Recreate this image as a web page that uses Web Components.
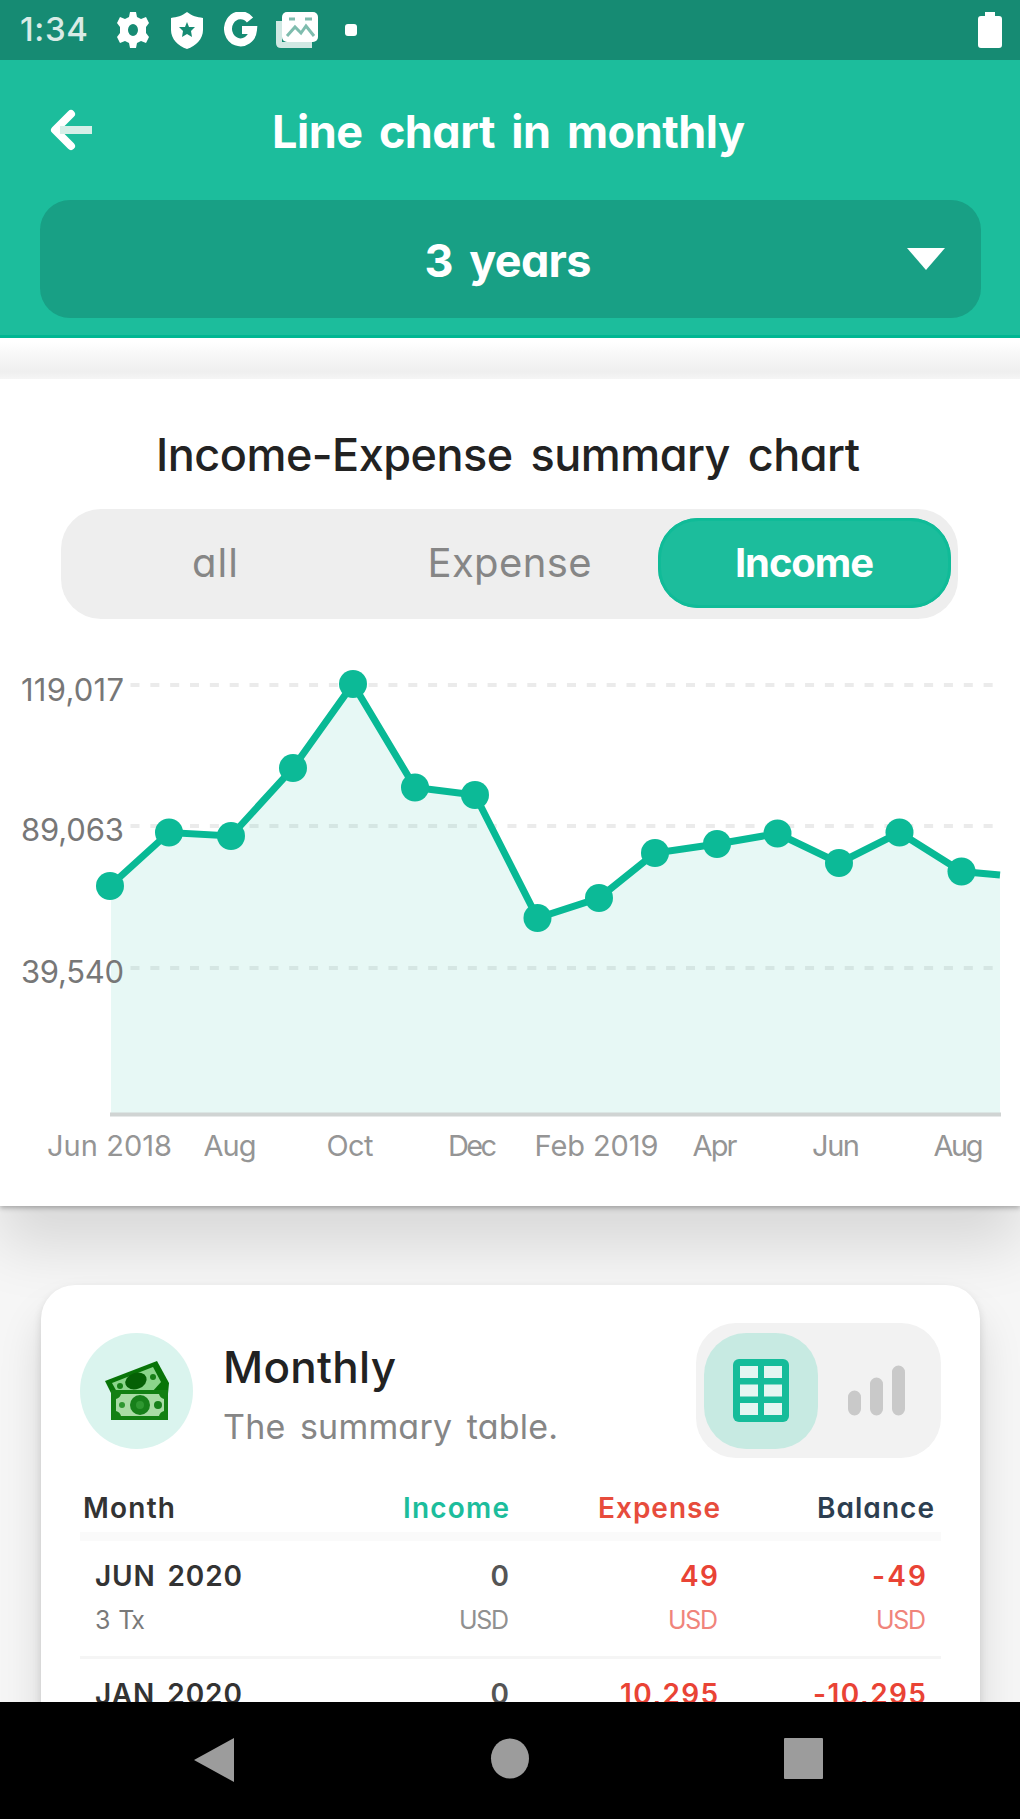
<!DOCTYPE html>
<html lang="en">
<head>
<meta charset="utf-8">
<title>Line chart in monthly</title>
<style>
    body{
        margin: 0;
        width: 1020px;
        height: 1819px;
        overflow: hidden;
        font-family: Inter, Roboto, sans-serif;
        font-feature-settings: "cv11";
        --green: #1cbd9c;
        --red: #e74c3c;
        --navy: #2c3e50;
    }
</style>
</head>
<body>
<finance-screen></finance-screen>

<script>
const define = (name, html, setup) => {
    const template = document.createElement('template');
    template.innerHTML = html;

    window.customElements.define(name, class extends HTMLElement {
        connectedCallback() {
            if(this.shadowRoot) return;
            this.attachShadow({mode: 'open'});
            this.shadowRoot.appendChild(template.content.cloneNode(true));
            if(setup) setup(this, this.shadowRoot);
        }
    });
};

// one line of text, tracked so that it fills the given width
define('text-label', `
    <style>
        :host{
            display: block;
            width: max-content;
            white-space: nowrap;
            line-height: 1.2;
            word-spacing: 0.14em;
        }
    </style>
    <slot></slot>
`, host => {
    const width = Number(host.getAttribute('width'));
    if(!width) return;
    const spacing = (width - host.getBoundingClientRect().width) / (host.textContent.length - 1);
    host.style.letterSpacing = spacing + 'px';
    host.style.marginRight = -spacing + 'px';
});

define('status-bar', `
    <style>
        :host{
            display: flex;
            align-items: center;
            box-sizing: border-box;
            height: 60px;
            padding: 0 18px 0 20px;
            background-color: #168b73;
            color: #fff;
        }
        text-label{
            font-size: 33px;
            font-weight: 500;
            color: #d9ebe6;
        }
        .icons{
            display: flex;
            align-items: center;
            flex: 1;
            margin-left: 28px;
        }
        svg{
            display: block;
            fill: currentColor;
        }
    </style>
    <text-label width="68">1:34</text-label>
    <div class="icons">
        <svg width="34" height="36" viewBox="0 0 34 36"><path fill-rule="evenodd" d="M14 0h6l1 5 4 2 5-2 3 6-3 4v6l3 4-3 6-5-2-4 2-1 5h-6l-1-5-4-2-5 2-3-6 3-4v-6l-3-4 3-6 5 2 4-2zM17 12a5 6 0 1 0 0 12a5 6 0 1 0 0-12z"/></svg>
        <svg style="margin-left: 20px" width="34" height="37" viewBox="0 0 34 37"><path fill-rule="evenodd" d="M17 0c5 4 10 5 16 6v12c0 9-7 16-16 19C8 34 1 27 1 18V6c6-1 11-2 16-6zM17 10l-2 5-6 0 4 4-1 6 5-3 5 3-1-6 4-4h-6z"/></svg>
        <svg style="margin-left: 20px" width="34" height="36" viewBox="0 0 34 36"><path fill="none" stroke="currentColor" stroke-width="8" d="M26 8A12.500 13.500 0 1 0 29 18H18"/></svg>
        <svg style="margin-left: 18px" width="42" height="36" viewBox="0 0 42 36"><path opacity=".8" d="M0 9h6v21h30v6H5q-5 0-5-5z"/><rect x="6" width="36" height="30" rx="5"/><path fill="none" stroke="#7fbcae" stroke-width="3" d="M11 24l8-9 6 6 5-7 8 10M13 7h6M29 7h7"/></svg>
        <svg style="margin-left: 27px" width="12" height="12"><rect width="12" height="12" rx="3"/></svg>
    </div>
    <svg width="24" height="36"><path d="M7 0h10v4h4q3 0 3 3v26q0 3-3 3H3q-3 0-3-3V7q0-3 3-3h4z"/></svg>
`);

define('app-header', `
    <style>
        :host{
            display: block;
            box-sizing: border-box;
            height: 278px;
            padding: 0 39px 0 40px;
            background-color: var(--green);
            color: #fff;
            border-bottom: solid 3px #00b692;
        }
        .bar, .select{
            display: grid;
            grid-template-columns: 44px 1fr 44px;
            align-items: center;
            justify-items: center;
        }
        .bar{
            height: 140px;
            padding: 0 12px 0 8px;
        }
        .select{
            height: 118px;
            padding: 0 33px 0 28px;
            border-radius: 30px;
            background-color: #18a085;
        }
        text-label{
            padding-top: 3px;
            font-size: 45px;
            font-weight: 700;
        }
    </style>
    <div class="bar">
        <svg width="44" height="42"><path fill="none" stroke="#fff" stroke-width="8" stroke-linecap="round" stroke-linejoin="round" d="M23 5L7 21l16 16"/><path stroke="#d5efe8" stroke-width="8" d="M12 21h32"/></svg>
        <text-label width="473">Line chart in monthly</text-label>
    </div>
    <div class="select">
        <span></span>
        <text-label width="167">3 years</text-label>
        <svg width="38" height="22"><path fill="#fff" d="M0 0h38L19 22z"/></svg>
    </div>
`);

define('segmented-control', `
    <style>
        :host{
            display: grid;
            grid-template-columns: 264px 1fr 293px;
            box-sizing: border-box;
            width: 897px;
            height: 111px;
            padding: 9px 7px 11px;
            border-radius: 40px;
            background-color: #eee;
            color: #868686;
            font-size: 40px;
        }
        div{
            display: flex;
            align-items: center;
            justify-content: center;
        }
        .active{
            border-radius: 40px;
            background-color: var(--green);
            box-shadow: inset 0 0 0 3px #10bb98;
            color: #fff;
            font-weight: 700;
        }
    </style>
    <div style="padding-left: 30px"><text-label width="46">all</text-label></div>
    <div style="padding-left: 29px"><text-label width="164">Expense</text-label></div>
    <div class="active"><text-label width="139">Income</text-label></div>
`);

define('line-chart', `
    <style>
        :host{
            display: block;
        }
        svg{
            display: block;
        }
        .grid{
            stroke: #dedede;
            stroke-opacity: .6;
            stroke-width: 4;
            stroke-dasharray: 9 10.84;
        }
        .area{
            fill: var(--green);
            fill-opacity: .105;
        }
        .line{
            fill: none;
            stroke: #08b995;
            stroke-width: 7;
        }
        circle{
            fill: #0cba97;
        }
        text{
            fill: #777;
            font-size: 31px;
        }
        .months text{
            fill: #959595;
            font-size: 29px;
            text-anchor: middle;
        }
    </style>
    <svg width="1020" height="586" viewBox="0 620 1020 586">
        <g class="lines"></g>
        <path class="area"/>
        <path d="M110 1114.500H1001" stroke="#d0d4d3" stroke-width="4"/>
        <path class="line"/>
        <g class="dots"></g>
        <g class="values"></g>
        <g class="months"></g>
    </svg>
`, (host, root) => {
    const points = [
        [110, 886], [169, 832.5], [231, 836], [293, 768], [353, 684],
        [415, 787.5], [475, 795], [537.5, 918], [599, 898], [655, 853],
        [717, 844], [777.5, 833.5], [839, 863], [899.5, 832.5], [961.5, 871.5]
    ];
    const values = [['119,017', 685, 701], ['89,063', 826, 841], ['39,540', 968, 983]];
    const months = [
        ['Jun 2018', 109.5, 125], ['Aug', 230, 53], ['Oct', 350, 47], ['Dec', 472.5, 49],
        ['Feb 2019', 596.5, 124], ['Apr', 715, 45], ['Jun', 836, 48], ['Aug', 958.5, 50]
    ];
    const line = 'M' + points.join('L') + 'L1000,875';

    root.querySelector('.line').setAttribute('d', line);
    root.querySelector('.area').setAttribute('d', line + 'V1114H111V886');
    root.querySelector('.dots').innerHTML = points.map(([x, y]) => `<circle cx="${x}" cy="${y}" r="14"/>`).join('');
    root.querySelector('.lines').innerHTML = values.map(([, y]) => `<path class="grid" d="M130.500 ${y}H996"/>`).join('');
    root.querySelector('.values').innerHTML = values.map(([text,, y]) => `<text x="21" y="${y}" textLength="103">${text}</text>`).join('');
    root.querySelector('.months').innerHTML = months.map(([text, x, width]) => `<text x="${x}" y="1156" textLength="${width}">${text}</text>`).join('');
});

define('chart-card', `
    <style>
        :host{
            display: flex;
            flex-direction: column;
            align-items: center;
            height: 827px;
            background-color: #fff;
            box-shadow: 0 2px 5px rgba(0,0,0,0.28), 0 40px 56px rgba(0,0,0,0.12);
            clip-path: inset(0 0 -120px 0);
        }
        text-label{
            margin: 49px 2px 27px 0;
            font-size: 45px;
            line-height: 54px;
            font-weight: 500;
            color: #222;
        }
        segmented-control{
            margin: 0 1px 1px 0;
        }
        line-chart{
            align-self: flex-start;
        }
    </style>
    <text-label width="704" style="position: relative; left: -2px">Income-Expense summary chart</text-label>
    <segmented-control></segmented-control>
    <line-chart></line-chart>
`);

define('view-toggle', `
    <style>
        :host{
            display: flex;
            align-items: center;
            box-sizing: border-box;
            width: 245px;
            height: 135px;
            padding: 0 36px 0 8px;
            border-radius: 40px;
            background-color: #f2f2f2;
            justify-content: space-between;
        }
        .active{
            display: flex;
            align-items: center;
            justify-content: center;
            width: 114px;
            height: 116px;
            border-radius: 42px;
            background-color: #c7eae2;
        }
    </style>
    <div class="active">
        <svg width="56" height="64" viewBox="0 0 56 64">
            <rect width="56" height="63" rx="6" fill="#16bc9a"/>
            <path fill="#e5f6f2" d="M7 7h18v12H7zM31 7h18v12H31zM7 25.500h18v12H7zM31 25.500h18v12H31zM7 44h18v12H7zM31 44h18v12H31z"/>
        </svg>
    </div>
    <svg width="57" height="52" viewBox="0 0 57 52">
        <path stroke="#c9c9c9" stroke-width="13" stroke-linecap="round" d="M6.500 32v12M28.500 19v25M50.500 7v37"/>
    </svg>
`);

define('card-heading', `
    <style>
        :host{
            display: flex;
            align-items: center;
            height: 135px;
        }
        .icon{
            display: flex;
            align-items: center;
            justify-content: center;
            width: 113px;
            height: 116px;
            border-radius: 50%;
            background-color: #daf4ee;
        }
        .text{
            flex: 1;
            padding: 12px 0 0 30px;
        }
        .title{
            font-size: 44px;
            line-height: 60px;
            font-weight: 500;
            color: #222;
        }
        .subtitle{
            font-size: 34px;
            line-height: 60px;
            color: #868686;
        }
    </style>
    <div class="icon">
        <svg width="64" height="60" viewBox="0 0 64 60">
            <path fill="#087408" d="M0 20L52 0l12 22-2 22H12z"/>
            <path fill="#8bd58b" d="M7 22l41-16 8 15-9 10H12z"/>
            <ellipse cx="31" cy="20" rx="11" ry="8" fill="#056005" transform="rotate(-20 31 20)"/>
            <circle cx="15" cy="25" r="3" fill="#168016"/><circle cx="48" cy="16" r="3" fill="#168016"/>
            <path fill="#138013" d="M6 29h57v30H6z"/>
            <path fill="#a9dca5" d="M16 33h38q1 4 5 5v12q-4 1-5 5H16q-1-4-5-5V38q4-1 5-5z"/>
            <circle cx="35" cy="44" r="10" fill="#17801a"/>
            <circle cx="35" cy="44" r="4" fill="#2f9731"/>
            <circle cx="17" cy="44" r="3" fill="#2f9731"/><circle cx="53" cy="44" r="4" fill="#17801a"/>
        </svg>
    </div>
    <div class="text">
        <text-label class="title" width="173">Monthly</text-label>
        <text-label class="subtitle" width="335">The summary table.</text-label>
    </div>
    <view-toggle></view-toggle>
`);

define('month-row', `
    <style>
        :host{
            display: grid;
            grid-template-columns: 219px 210px 211px 220px;
            box-sizing: border-box;
            height: 118px;
            padding-top: 17px;
            border-bottom: solid 3px #f5f5f5;
            row-gap: 8px;
            grid-auto-rows: 36px;
            color: #555;
            font-size: 28px;
            font-weight: 600;
        }
        ::slotted(text-label){
            line-height: 36px !important;
            justify-self: end;
        }
        ::slotted(.month){
            justify-self: start;
            padding-left: 15px;
            color: #333;
        }
        ::slotted(.red){
            padding-right: 2px;
            color: #e94335;
        }
        ::slotted(.last){
            padding-right: 14px;
        }
        ::slotted(.sub){
            font-size: 25px;
            font-weight: 400;
            opacity: .65;
        }
    </style>
    <slot></slot>
`);

define('month-table', `
    <style>
        :host{
            display: block;
            margin-top: 26px;
        }
        .head{
            display: grid;
            grid-template-columns: 219px 210px 211px 220px;
            align-items: center;
            justify-items: end;
            height: 48px;
            padding-top: 1px;
            box-sizing: border-box;
            font-size: 28px;
            font-weight: 600;
            color: #333;
        }
        .rule{
            height: 9px;
            background-color: #fafafa;
        }
    </style>
    <div class="head">
        <text-label width="95" style="justify-self: start; padding-left: 3px">Month</text-label>
        <text-label width="106" style="color: var(--green)">Income</text-label>
        <text-label width="122" style="color: var(--red)">Expense</text-label>
        <text-label width="123" style="color: var(--navy); padding-right: 6px">Balance</text-label>
    </div>
    <div class="rule"></div>
    <month-row>
        <text-label class="month" width="162">JUN 2020</text-label>
        <text-label>0</text-label>
        <text-label class="red" width="40">49</text-label>
        <text-label class="red last" width="68">-49</text-label>
        <text-label class="month sub" width="65">3 Tx</text-label>
        <text-label class="sub" width="50">USD</text-label>
        <text-label class="red sub" width="52">USD</text-label>
        <text-label class="red sub last" width="64">USD</text-label>
    </month-row>
    <month-row>
        <text-label class="month" width="162">JAN 2020</text-label>
        <text-label>0</text-label>
        <text-label class="red" width="100">10,295</text-label>
        <text-label class="red last" width="127">-10,295</text-label>
    </month-row>
`);

define('summary-card', `
    <style>
        :host{
            position: relative;
            display: block;
            margin: 79px 40px 0 41px;
            height: 500px;
            padding: 38px 39px 0;
            border-radius: 34px 34px 0 0;
            background-color: #fff;
            box-shadow: 0 4px 9px rgba(0,0,0,0.12), 0 30px 44px rgba(0,0,0,0.13);
        }
    </style>
    <card-heading></card-heading>
    <month-table></month-table>
`);

define('nav-bar', `
    <style>
        :host{
            display: flex;
            justify-content: space-between;
            box-sizing: border-box;
            height: 117px;
            padding: 36px 197px 0 194px;
            background-color: #000;
        }
        svg{
            fill: #9c9c9c;
        }
    </style>
    <svg width="40" height="44"><path d="M0 22L40 0v44z"/></svg>
    <svg width="40" height="44"><ellipse cx="21" cy="20.500" rx="19" ry="20"/></svg>
    <svg width="40" height="44"><rect x="1" width="39" height="41" rx="1"/></svg>
`);

define('finance-screen', `
    <style>
        :host{
            display: flex;
            flex-direction: column;
            width: 1020px;
            height: 1819px;
        }
        main{
            height: 1364px;
            overflow: hidden;
            background-color: #f6f6f6;
        }
        .strip{
            height: 41px;
            background-image: linear-gradient(#fff 4px, #f9f9f9 14px, #efefef 34px, #f5f5f5);
        }
    </style>
    <status-bar></status-bar>
    <app-header></app-header>
    <main>
        <div class="strip"></div>
        <chart-card></chart-card>
        <summary-card></summary-card>
    </main>
    <nav-bar></nav-bar>
`);
</script>
</body>
</html>
